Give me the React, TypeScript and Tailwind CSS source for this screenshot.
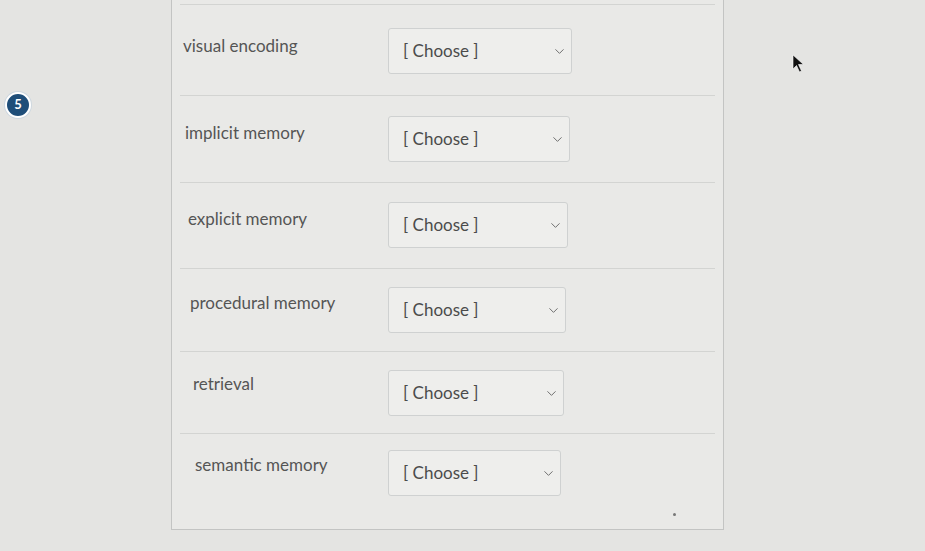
import { ChevronDown } from 'lucide-react';

// the reference is a photo taken at a slight angle, so each row sits a little differently
const rows = [
  { label: 'visual encoding', h: 'h-[91px]', lab: 'mt-[28px] pl-[3px]', sel: 'mt-[23px] w-[184px]' },
  { label: 'implicit memory', h: 'h-[87px]', lab: 'mt-[24px] pl-[5px]', sel: 'mt-[20px] w-[182px]' },
  { label: 'explicit memory', h: 'h-[86px]', lab: 'mt-[23px] pl-[8px]', sel: 'mt-[19px] w-[180px]' },
  { label: 'procedural memory', h: 'h-[83px]', lab: 'mt-[21px] pl-[10px]', sel: 'mt-[18px] w-[178px]' },
  { label: 'retrieval', h: 'h-[82px]', lab: 'mt-[19px] pl-[13px]', sel: 'mt-[18px] w-[176px]' },
  { label: 'semantic memory', h: 'h-[96px]', lab: 'mt-[18px] pl-[15px]', sel: 'mt-[16px] w-[173px]' },
];

function ChooseSelect({ className }: { className: string }) {
  return (
    <div
      className={`flex h-[46px] items-center justify-between rounded-[3px] border border-[#cfd1d1] bg-[#eeeeec] pl-[14px] pr-[4px] text-[17px] text-[#4b4b4b] ${className}`}
    >
      <span>[ Choose ]</span>
      <ChevronDown size={15} strokeWidth={1.5} className="text-[#666]" />
    </div>
  );
}

export default function App() {
  return (
    <div
      className="relative h-[551px] w-[925px] overflow-hidden bg-[#e4e4e2]"
      style={{ fontFamily: 'Lato, "Open Sans", sans-serif' }}
    >
      {/* question number */}
      <div className="absolute left-[5px] top-[92px] flex h-[26px] w-[26px] items-center justify-center rounded-full border-2 border-white bg-[#1f4e79] text-[13px] font-bold text-white shadow-[0_0_0_1px_#cfd8e0]">
        5
      </div>

      {/* mouse pointer */}
      <svg
        className="absolute left-[792px] top-[54px]"
        width="14"
        height="20"
        viewBox="0 0 14 20"
      >
        <path d="M1 1 L1 15 L4.5 11.5 L7.5 18 L9.5 17 L6.5 10.5 L11.5 10.5 Z" fill="#111" stroke="#fff" strokeWidth="0.6" />
      </svg>

      <div className="ml-[171px] w-[553px] border-x border-b border-[#c3c4c3] bg-[#e9e9e7] px-[8px] pt-[4px]">
        {rows.map((r) => (
          <div key={r.label} className={`flex items-start border-t border-[#d3d4d2] ${r.h}`}>
            <div className={`w-[208px] text-[17px] text-[#555] ${r.lab}`}>{r.label}</div>
            <div className={r.sel.split(' ')[0]}>
              <ChooseSelect className={r.sel.split(' ')[1]} />
            </div>
          </div>
        ))}
      </div>

      <span className="absolute left-[673px] top-[513px] h-[3px] w-[3px] rounded-full bg-[#777]" />
    </div>
  );
}
